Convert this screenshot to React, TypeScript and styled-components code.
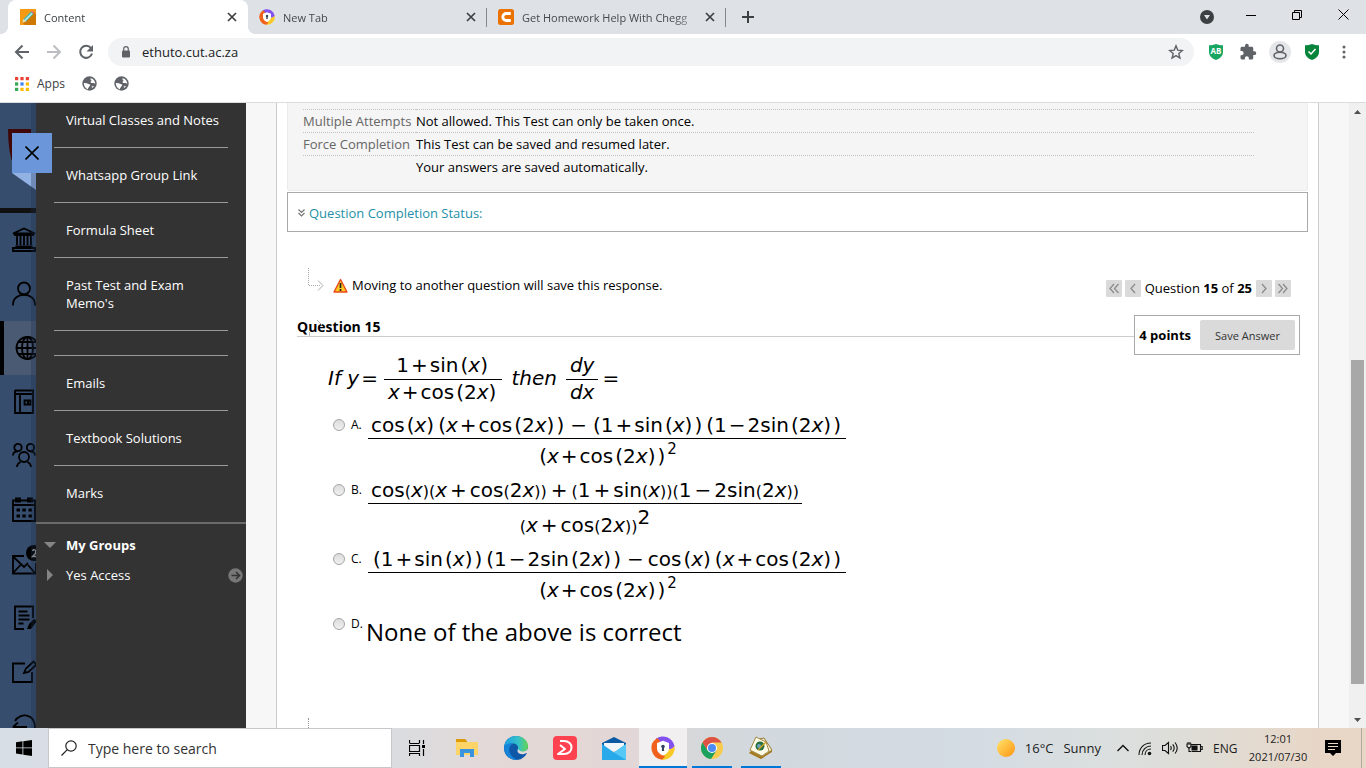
import React from 'react';
import styled, { createGlobalStyle, css } from 'styled-components';

const GlobalStyle = createGlobalStyle`
  * { box-sizing: border-box; }
  html, body { margin: 0; height: 100%; overflow: hidden; }
  body { font-family: "Open Sans", "Noto Sans", sans-serif; font-size: 13px; color: #000; }
  button { font: inherit; color: inherit; border: 0; padding: 0; background: none; cursor: pointer; }
  a { color: inherit; text-decoration: none; }
  svg { display: block; flex: none; }
`;

const Screen = styled.div`
  display: flex;
  flex-direction: column;
  height: 100vh;
  background: #fff;
`;

/* ---------- Browser chrome ---------- */

const TabStrip = styled.div`
  display: flex;
  height: 34px;
  padding-left: 8px;
  background: #dee1e6;
`;

const Tab = styled.div<{ $active?: boolean; $sep?: boolean }>`
  position: relative;
  display: flex;
  align-items: center;
  width: ${p => (p.$active ? 240 : 239)}px;
  padding: 0 8px 0 ${p => (p.$active ? 12 : 11)}px;
  gap: 8px;
  font-size: 11px;
  color: ${p => (p.$active ? '#3c4043' : '#45494d')};
  ${p => p.$active && css`
    background: #fff;
    border-radius: 8px 8px 0 0;
    &::before, &::after {
      content: '';
      position: absolute;
      bottom: 0;
      width: 8px;
      height: 8px;
    }
    &::before { left: -8px; background: radial-gradient(circle at 0 0, #dee1e6 8px, #fff 8px); }
    &::after { right: -8px; background: radial-gradient(circle at 100% 0, #dee1e6 8px, #fff 8px); }
  `}
  ${p => p.$sep && css`
    &::after {
      content: '';
      position: absolute;
      right: 0;
      top: 8px;
      width: 1px;
      height: 19px;
      background: #84888d;
    }
  `}
`;

const TabTitle = styled.span`
  flex: 1;
  min-width: 0;
  overflow: hidden;
  white-space: nowrap;
  mask-image: linear-gradient(to right, #000 calc(100% - 20px), rgba(0, 0, 0, 0.3));
`;

const IconButton = styled.button<{ $w: number; $h: number }>`
  display: flex;
  flex: none;
  align-items: center;
  justify-content: center;
  width: ${p => p.$w}px;
  height: ${p => p.$h}px;
`;

const Spacer = styled.div`flex: 1;`;

const NewTabButton = styled(IconButton)`margin-left: 7px;`;
const DropButton = styled(IconButton)`margin-right: 5px;`;

const Toolbar = styled.div`
  display: flex;
  align-items: center;
  height: 36px;
  padding: 0 6px;
`;

const AddressBar = styled.div`
  display: flex;
  flex: 1;
  align-items: center;
  height: 28px;
  margin: 0 6px;
  padding: 0 4px 0 12px;
  border-radius: 14px;
  background: #f1f3f4;
`;

const AddressInput = styled.input`
  flex: 1;
  min-width: 0;
  margin-left: 10px;
  padding: 0;
  border: 0;
  outline: 0;
  background: none;
  font: 13px "Open Sans", sans-serif;
  color: #202124;
`;

const Profile = styled.span`
  display: flex;
  align-items: center;
  justify-content: center;
  width: 22px;
  height: 22px;
  border-radius: 11px;
  background: #e4e6ea;
`;

const Bookmarks = styled.div`
  display: flex;
  align-items: center;
  height: 33px;
  padding: 0 15px 5px;
  border-bottom: 1px solid #dadce0;
  font-size: 12px;
  color: #3c4043;
`;

const Bookmark = styled.a`
  display: flex;
  align-items: center;
  gap: 8px;
  margin-right: 17px;
`;

/* ---------- Page shell ---------- */

const Page = styled.div`
  display: flex;
  flex: 1;
  min-height: 0;
  background: #f7f7f7;
`;

const Rail = styled.nav`
  position: relative;
  width: 36px;
  background: #374d6e;
  &::after {
    content: '';
    position: absolute;
    inset: 0 0 0 31px;
    background: rgba(30, 45, 75, 0.3);
    pointer-events: none;
  }
`;

const RailClip = styled.div`
  height: 100%;
  overflow: hidden;
`;

const RailLogo = styled.div`
  height: 110px;
  border-bottom: 5px solid #111;
`;

const RailLink = styled.a<{ $active?: boolean }>`
  display: flex;
  align-items: center;
  height: 54px;
  padding-left: ${p => (p.$active ? 11 : 12)}px;
  ${p => p.$active && css`
    border-left: 4px solid #000;
    background: #4a5a72;
  `}
`;

const CloseButton = styled.button`
  position: absolute;
  z-index: 2;
  left: 12px;
  top: 30px;
  display: flex;
  align-items: center;
  justify-content: center;
  width: 40px;
  height: 40px;
  background: #6b96d9;
`;

const Menu = styled.nav`
  width: 210px;
  overflow: hidden;
  background: #333;
  color: #fff;
  line-height: 18px;
`;

const MenuList = styled.div`
  padding: 0 18px;
  border-bottom: 2px solid #6a6a6a;
`;

const MenuItem = styled.a<{ $top?: number; $bottom?: number; $last?: boolean }>`
  display: block;
  padding: ${p => p.$top ?? 18}px 0 ${p => p.$bottom ?? 18}px 12px;
  border-bottom: ${p => (p.$last ? 0 : 1)}px solid #999;
`;

const Groups = styled.div`padding-top: 6px;`;

const GroupRow = styled.a<{ $bold?: boolean }>`
  display: flex;
  align-items: center;
  height: 30px;
  padding: 0 3px 0 8px;
  font-weight: ${p => (p.$bold ? 700 : 400)};
`;

const GroupName = styled.span`
  flex: 1;
  padding-left: 10px;
`;

const Sheet = styled.main`
  flex: 1;
  min-width: 0;
  margin: 0 30px;
  padding: 0 10px;
  overflow: hidden;
  border: solid #ccc;
  border-width: 0 1px;
  background: #fff;
`;

const ScrollTrack = styled.div`
  display: flex;
  flex-direction: column;
  align-items: center;
  justify-content: space-between;
  width: 17px;
  padding: 7px 0 6px;
  background: #f0f0f0;
`;

const ScrollThumb = styled.div`
  flex: none;
  width: 13px;
  height: 53%;
  margin-top: auto;
  margin-bottom: 34px;
  background: #a8a8a8;
`;

/* ---------- Test content ---------- */

const InfoPanel = styled.section`
  height: 88px;
  padding: 6px 53px 0 15px;
  border: solid #ebebeb;
  border-width: 0 1px 1px;
  border-radius: 0 0 3px 3px;
  background: #f5f5f5;
`;

const InfoTable = styled.table`
  width: 100%;
  border-collapse: separate;
  border-spacing: 0;
  text-align: left;
  line-height: 22px;
  th, td { height: 23px; padding: 0; border-top: 1px dotted #c2c2c2; }
  th { width: 113px; font-weight: 400; color: #666; white-space: nowrap; }
`;

const StatusBox = styled.section`
  display: flex;
  align-items: center;
  height: 40px;
  margin-top: 1px;
  padding: 2px 0 0 10px;
  border: 1px solid #a9a9a9;
`;

const StatusLink = styled.button`
  display: flex;
  align-items: center;
  gap: 4px;
  color: #248fa8;
`;

const MessageRow = styled.div`
  display: flex;
  align-items: flex-start;
  height: 47px;
  margin-top: 36px;
  padding: 0 17px 0 20px;
`;

const Warning = styled.p`
  display: flex;
  align-items: center;
  gap: 4px;
  margin: 7px 0 0 9px;
  line-height: 20px;
`;

const Pager = styled.div`
  display: flex;
  align-items: center;
  gap: 3px;
  margin: 11px 0 0 auto;
  line-height: 18px;
`;

const PagerText = styled.span`padding: 0 1px;`;

const PagerButton = styled.button`
  display: flex;
  align-items: center;
  justify-content: center;
  width: 16px;
  height: 17px;
  border-radius: 1px;
  background: #dadada;
`;

const QuestionHeader = styled.header`
  display: flex;
  align-items: flex-start;
  padding: 0 8px 0 10px;
`;

const QuestionTitle = styled.h3`
  position: relative;
  flex: 1;
  margin: 0;
  padding-top: 2px;
  border-bottom: 1px solid #ccc;
  font-size: 14px;
  line-height: 19px;
`;

const TitleArrow = styled.svg`
  position: absolute;
  left: 11px;
  top: 3px;
`;

const PointsBox = styled.div`
  display: flex;
  align-items: center;
  gap: 9px;
  height: 40px;
  padding: 0 4px;
  border: 1px solid #a9a9a9;
  font-weight: 700;
`;

const SaveButton = styled.button`
  width: 95px;
  height: 30px;
  border-radius: 2px;
  background: #dadada;
  color: #333;
  font-size: 11px;
  font-weight: 400;
`;

const Math = styled.div`
  display: flex;
  align-items: center;
  font-family: "DejaVu Sans", sans-serif;
  font-size: 20px;
  line-height: 24px;
  white-space: nowrap;
`;

const Prompt = styled(Math)`
  height: 52px;
  margin: -3px 0 9px 41px;
`;

const Variable = styled.i<{ $left?: number }>`
  margin-left: ${p => p.$left ?? 0}px;
`;

const Frac = styled.div<{ $left?: number }>`
  display: flex;
  flex-direction: column;
  align-items: center;
  margin-left: ${p => p.$left ?? 0}px;
`;

const Numerator = styled.div<{ $pad: number }>`
  align-self: stretch;
  padding: 0 3px ${p => p.$pad}px;
  border-bottom: 1px solid #000;
  text-align: center;
`;

const Denominator = styled.div<{ $top: number }>`
  padding: ${p => p.$top}px 4px 0;
`;

const Token = styled.span<{ $kind: string; $compact?: boolean }>`
  ${p => p.$kind === 'var' && css`font-style: italic;`}
  ${p => p.$kind === 'open' && css`margin-left: ${p.$compact ? 0 : 2}px;`}
  ${p => p.$kind === 'close' && css`margin-right: ${p.$compact ? 0 : 2}px;`}
  ${p => p.$compact && (p.$kind === 'open' || p.$kind === 'close') && css`
    font-size: 16px;
    line-height: 16px;
  `}
  ${p => p.$kind === 'op' && css`margin: 0 ${p.$compact ? 3 : 2}px;`}
  ${p => p.$kind === 'main' && css`margin: 0 4px;`}
`;

const Power = styled.sup<{ $big?: boolean }>`
  position: relative;
  top: ${p => (p.$big ? -8 : -9)}px;
  font-size: ${p => (p.$big ? 20 : 15)}px;
  line-height: 0;
  vertical-align: baseline;
`;

const Options = styled.div`
  display: flex;
  flex-direction: column;
  gap: 10px;
  padding-left: 46px;
`;

const Option = styled.label`
  display: flex;
  align-items: flex-start;
`;

const Radio = styled.input`
  appearance: none;
  width: 12px;
  height: 12px;
  margin: 6px 6px 0 0;
  border: 1px solid #a5a5a5;
  border-radius: 6px;
  background: linear-gradient(#dcdcdc, #f0f0f0);
`;

const Letter = styled.span`
  width: 17px;
  font-size: 12px;
  line-height: 24px;
`;

const PlainAnswer = styled.span`
  margin: 4px 0 0 -2px;
  font-size: 24px;
  line-height: 32px;
`;

const TailLine = styled.div`
  height: 30px;
  margin: 70px 0 0 21px;
  border-left: 1px dotted #999;
`;

/* ---------- Taskbar ---------- */

const Taskbar = styled.footer`
  display: flex;
  height: 40px;
  background: linear-gradient(to right, #d8dee5 0, #dadcdf 29%, #e4d8d6 37%, #e2d7d6 46%, #d2d8dc 53%, #d3dbe3 70%, #dbdfde 82%, #e0dcd4 89%, #e8d6c6 97%);
`;

const SearchBox = styled.label`
  display: flex;
  align-items: center;
  width: 344px;
  padding-left: 12px;
  gap: 11px;
  border: 1px solid #c5c7ca;
  background: #fff;
`;

const SearchInput = styled.input`
  flex: 1;
  min-width: 0;
  padding: 0;
  border: 0;
  outline: 0;
  font: 14px "Open Sans", sans-serif;
  &::placeholder { color: #333; opacity: 1; }
`;

const Apps = styled.div`
  display: flex;
  gap: 1px;
  padding-left: 2px;
`;

const AppButton = styled.button<{ $state?: 'active' | 'open' }>`
  position: relative;
  display: flex;
  align-items: center;
  justify-content: center;
  width: 48px;
  background: ${p => (p.$state === 'active' ? '#f1efef' : 'none')};
  ${p => p.$state && css`
    &::after {
      content: '';
      position: absolute;
      bottom: 0;
      left: ${p.$state === 'active' ? 0 : 4}px;
      right: ${p.$state === 'active' ? 0 : 4}px;
      height: 2px;
      background: #0078d7;
    }
  `}
`;

const Tray = styled.div`
  display: flex;
  align-items: center;
  margin-left: auto;
  color: #1c1c1c;
`;

const Weather = styled.button`
  display: flex;
  align-items: center;
  gap: 10px;
  margin-right: 15px;
`;

const TrayIcons = styled.div`
  display: flex;
  align-items: center;
  gap: 8px;
  margin-right: 10px;
`;

const Language = styled.button`
  width: 24px;
  font-size: 12px;
`;

const Clock = styled.button`
  width: 60px;
  margin: 0 16px 0 11px;
  font-size: 11px;
  line-height: 18px;
`;

const ShowDesktop = styled.div`
  align-self: stretch;
  width: 5px;
  margin-left: 19px;
  border-left: 1px solid #b5aaa2;
`;

/* ---------- Icons ---------- */

const CloseX = () => (
  <svg width="16" height="16" viewBox="0 0 16 16" stroke="#3c4043" strokeWidth="1.7"><path d="M4 4l8 8M12 4l-8 8" /></svg>
);

const PencilIcon = () => (
  <svg width="16" height="16" viewBox="0 0 16 16">
    <rect width="16" height="16" fill="#f59a12" /><path d="M3 14L14 3l2 2v11H5z" fill="#cf7905" />
    <path d="M2.5 13.5l1-3.500L11 2.500l2.500 2.500L6 12.500z" fill="#4cb9b4" /><path d="M5 11.500L12 4.300" stroke="#c5f3ef" strokeWidth="1.200" />
    <path d="M2.500 13.500l1-3.500L6 12.500z" fill="#f6dfb4" /><path d="M11 2.500l1-.9 2.400 2.500-.9.9z" fill="#e36b7e" />
  </svg>
);

const AvastIcon = ({ size }: { size: number }) => (
  <svg width={size} height={size} viewBox="0 0 24 24">
    <path d="M5 2.500A12 12 0 0 1 23.500 10Q21 15 16 12L8 6z" fill="#8352ee" />
    <path d="M23.500 10A11.700 11.700 0 0 1 11 23.700L7 17l9-4q5 1 7.500-3z" fill="#f9c928" />
    <path d="M11 23.700A11.700 11.700 0 0 1 5.500 2.500Q7 1.500 9 5L7 13q0 5 7 7-1 2-3 3.700z" fill="#f0611c" />
    <path d="M6 7l6-2.200L18 7v5.500c0 3.500-3 5.800-6 7-3-1.200-6-3.500-6-7z" fill="#fff" />
    <circle cx="12" cy="10.500" r="1.800" fill="#33415f" /><path d="M11.200 11h1.600l.4 4h-2.400z" fill="#33415f" />
  </svg>
);

const CheggIcon = () => (
  <svg width="16" height="16" viewBox="0 0 16 16">
    <rect width="16" height="16" rx="2.500" fill="#eb7100" />
    <path d="M12.800 4.500H8.300a3.500 3.500 0 0 0 0 7h4.500" fill="none" stroke="#fff" strokeWidth="2.800" />
  </svg>
);

const GlobeIcon = () => (
  <svg width="15" height="15" viewBox="0 0 15 15">
    <circle cx="7.500" cy="7.500" r="7.200" fill="#5f6368" />
    <path d="M1.800 7c1.500-.3 2.700.4 3.700.4.900 0 1 .8 2 .8.900 0 1 1 .3 1.600-.9.700-.3 1.500-1.200 1.700-.6.200-.5 1.400-.7 1.900C3.600 12.700 1.800 10 1.800 7z" fill="#fff" />
    <path d="M8.500 2.200c2.600.4 4.700 2.600 4.800 5.300-.8.300-1.300-.6-2.300-.5-1.300.2-2.600-.3-2.500-1.200.1-.7 1.100-.7.900-1.400-.2-.8-1.500-.7-.9-2.200z" fill="#fff" />
    <path d="M9.500 10.500l2.700-.8-1.700 2.300z" fill="#fff" />
  </svg>
);

const Rail24 = ({ children }: { children: React.ReactNode }) => (
  <svg width="24" height="26" viewBox="0 0 24 26" fill="none" stroke="#000" strokeWidth="1.800" overflow="visible">{children}</svg>
);

const railIcons: React.ReactNode[] = [
  <Rail24><path d="M1 6.500L12 1.500l11 5zM2 8h20M3.500 19.500h17M1 24v-3h22v3zM5 9v9M8.500 9v9M12 9v9M15.500 9v9M19 9v9" /></Rail24>,
  <Rail24><circle cx="12" cy="7.500" r="6" /><path d="M1 24.500v-1C1 10.500 23 10.500 23 23.500v1" /></Rail24>,
  <Rail24><circle cx="12.500" cy="13" r="11" /><ellipse cx="12.500" cy="13" rx="5.500" ry="11" /><path d="M12.500 2v22M1.500 13h22M3.500 7h18M3.500 19h18" /></Rail24>,
  <Rail24><path d="M3 1.500h19M3 1v23h18V5H3M8 5v19M12.500 11.500h6v4h-6zM15 13.500h2M21 1v4" /></Rail24>,
  <Rail24><circle cx="6" cy="4.500" r="3.700" /><circle cx="18.500" cy="4.500" r="3.700" /><circle cx="12" cy="14" r="5" /><path d="M1 12.500c0-3 2-4.500 5-3.800M23 12.500c0-3-2-4.500-5-3.800M5 24c0-2.500 1.500-4 3.500-5M19 24c0-2.500-1.500-4-3.500-5" /></Rail24>,
  <Rail24><path d="M1 3.500h22V24H1zM1 8h22" /><path d="M4 1.500h4v3H4zM16 1.500h4v3h-4z" /><path d="M4.500 13h3.500M10.300 13h3.500M16.500 13H20M4.500 19h3.500M10.300 19h3.500M16.500 19H20" strokeWidth="3" /></Rail24>,
  <Rail24><path d="M12 5H1v17.500h23V12M1 5.500l11 10.500 4-4M1 22l7.500-8M23 22l-7-8" /><circle cx="22" cy="2" r="8" fill="#000" stroke="none" /><path d="M20.500 0q1-2 2.500-1t0 4l-2.500 2.500H25" stroke="#aaa" strokeWidth="1.400" /></Rail24>,
  <Rail24><path d="M12 24H3V1.500h18V13M6.500 6.500h9M6.500 10.500h11M6.500 14.500h11M6.500 18.500h5" /><path d="M15 24l2-5 5-5 3 2-6 8z" fill="#000" stroke="none" /></Rail24>,
  <Rail24><path d="M13 4.500H1v18.500h19V13M12 14l2-4.500 7.500-7 3 3-8 7.500z" /></Rail24>,
  <Rail24><path d="M3 8c5-8.500 20-8 20 7M1 14l5-4.500M1 14l5 4M1 14h14" /></Rail24>,
];

const Chevron = ({ d }: { d: string }) => (
  <svg width="12" height="11" viewBox="0 0 12 11" fill="none" stroke="#8b8b8b" strokeWidth="1.300"><path d={d} /></svg>
);

/* ---------- Math ---------- */

type Part = { text: string; kind: string };

/** Splits an expression into tokens; "~" marks the sum or difference between the two outer terms. */
const parse = (source: string): Part[] =>
  (source.match(/cos|sin|~?[+−]|[()]|\d|[a-z]/g) ?? []).map(raw => {
    const text = raw.replace('~', '');
    if (text === '(') return { text, kind: 'open' };
    if (text === ')') return { text, kind: 'close' };
    if (text === '+' || text === '−') return { text, kind: raw.length > 1 ? 'main' : 'op' };
    return { text, kind: text.length === 1 && /[a-z]/.test(text) ? 'var' : 'plain' };
  });

const Expr = ({ of, compact }: { of: string; compact?: boolean }) => (
  <>{parse(of).map((t, i) => <Token key={i} $kind={t.kind} $compact={compact}>{t.text}</Token>)}</>
);

const options = [
  { letter: 'A.', top: 'cos(x)(x+cos(2x))~−(1+sin(x))(1−2sin(2x))' },
  { letter: 'B.', top: 'cos(x)(x+cos(2x))~+(1+sin(x))(1−2sin(2x))', compact: true },
  { letter: 'C.', top: '(1+sin(x))(1−2sin(2x))~−cos(x)(x+cos(2x))' },
];

const App = () => (
  <Screen>
    <GlobalStyle />
    <header>
      <TabStrip>
        <Tab $active><PencilIcon /><TabTitle>Content</TabTitle><IconButton aria-label="Close tab" $w={16} $h={16}><CloseX /></IconButton></Tab>
        <Tab $sep><AvastIcon size={16} /><TabTitle>New Tab</TabTitle><IconButton aria-label="Close tab" $w={16} $h={16}><CloseX /></IconButton></Tab>
        <Tab $sep><CheggIcon /><TabTitle>Get Homework Help With Chegg</TabTitle><IconButton aria-label="Close tab" $w={16} $h={16}><CloseX /></IconButton></Tab>
        <NewTabButton aria-label="New tab" $w={30} $h={34}>
          <svg width="12" height="12" viewBox="0 0 12 12" stroke="#3c4043" strokeWidth="2"><path d="M6 0v12M0 6h12" /></svg>
        </NewTabButton>
        <Spacer />
        <DropButton aria-label="Search tabs" $w={32} $h={34}>
          <svg width="14" height="14" viewBox="0 0 14 14"><circle cx="7" cy="7" r="7" fill="#3c4043" /><path d="M4 5h6l-3 4.500z" fill="#dee1e6" /></svg>
        </DropButton>
        <IconButton aria-label="Minimize" $w={46} $h={29}><svg width="10" height="10" viewBox="0 0 10 10"><path d="M0 5.500h10" stroke="#000" /></svg></IconButton>
        <IconButton aria-label="Restore" $w={46} $h={29}><svg width="10" height="10" viewBox="0 0 10 10" fill="none" stroke="#000"><path d="M.5 2.500h7v7h-7zM2.500 2.500v-2h7v7h-2" /></svg></IconButton>
        <IconButton aria-label="Close" $w={46} $h={29}><svg width="11" height="11" viewBox="0 0 11 11" stroke="#000"><path d="M.5.500l10 10M10.500.500l-10 10" /></svg></IconButton>
      </TabStrip>

      <Toolbar>
        <IconButton aria-label="Back" $w={32} $h={32}><svg width="16" height="16" viewBox="0 0 16 16" fill="none" stroke="#5f6368" strokeWidth="2"><path d="M15 8H2M8.500 1.500L2 8l6.500 6.500" /></svg></IconButton>
        <IconButton aria-label="Forward" $w={32} $h={32}><svg width="16" height="16" viewBox="0 0 16 16" fill="none" stroke="#bcbec1" strokeWidth="2"><path d="M1 8h13M7.500 1.500L14 8l-6.500 6.500" /></svg></IconButton>
        <IconButton aria-label="Reload" $w={32} $h={32}><svg width="16" height="16" viewBox="0 0 16 16"><path d="M13 4.200A6 6 0 1 0 14 9.500" fill="none" stroke="#5f6368" strokeWidth="2" /><path d="M15 1v6.500H8.500z" fill="#5f6368" /></svg></IconButton>
        <AddressBar>
          <svg width="12" height="12" viewBox="0 0 12 12"><rect x="2" y="4.500" width="8" height="7" rx="1" fill="#5f6368" /><path d="M3.700 5V3a2.300 2.300 0 0 1 4.600 0v2" fill="none" stroke="#5f6368" strokeWidth="1.200" /></svg>
          <AddressInput aria-label="Address" defaultValue="ethuto.cut.ac.za" />
          <IconButton aria-label="Bookmark this page" $w={28} $h={28}>
            <svg width="16" height="16" viewBox="0 0 16 16" fill="none" stroke="#5f6368" strokeWidth="1.400"><path d="M8 1.800l1.700 4.300 4.600.4-3.500 3 1.100 4.500L8 11.600 4.100 14l1.100-4.500-3.500-3 4.600-.4z" /></svg>
          </IconButton>
        </AddressBar>
        <IconButton aria-label="AB extension" $w={32} $h={32}>
          <svg width="14" height="16" viewBox="0 0 14 16"><path d="M7 0c2 1 4.500 1.300 7 1.300V8c0 4.500-4 7-7 8-3-1-7-3.500-7-8V1.300C2.500 1.300 5 1 7 0z" fill="#18a561" /><text x="7" y="10" textAnchor="middle" fill="#fff" fontSize="8" fontWeight="700" fontFamily="Open Sans">AB</text></svg>
        </IconButton>
        <IconButton aria-label="Extensions" $w={32} $h={32}>
          <svg width="18" height="18" viewBox="0 0 24 24" fill="#5f6368"><path d="M20.500 11H19V7c0-1.100-.9-2-2-2h-4V3.500a2.500 2.500 0 0 0-5 0V5H4c-1.100 0-2 .9-2 2v3.800h1.500a2.700 2.700 0 0 1 0 5.400H2V20c0 1.100.9 2 2 2h3.800v-1.500a2.700 2.700 0 0 1 5.400 0V22H17c1.100 0 2-.9 2-2v-4h1.500a2.500 2.500 0 0 0 0-5z" /></svg>
        </IconButton>
        <IconButton aria-label="Profile" $w={32} $h={32}>
          <Profile><svg width="16" height="16" viewBox="0 0 16 16" fill="none" stroke="#5f6368" strokeWidth="1.600"><circle cx="8" cy="4.500" r="3.500" /><ellipse cx="8" cy="11.500" rx="6" ry="3.300" /></svg></Profile>
        </IconButton>
        <IconButton aria-label="Security" $w={32} $h={32}>
          <svg width="14" height="16" viewBox="0 0 14 16"><path d="M7 0c2 1 4.500 1.300 7 1.300V8c0 4.500-4 7-7 8-3-1-7-3.500-7-8V1.300C2.500 1.300 5 1 7 0z" fill="#07843c" /><path d="M3.500 7.500L6 10l4.500-5" fill="none" stroke="#fff" strokeWidth="1.500" /></svg>
        </IconButton>
        <IconButton aria-label="Menu" $w={32} $h={32}>
          <svg width="4" height="14" viewBox="0 0 4 14" fill="#5f6368"><circle cx="2" cy="2" r="1.500" /><circle cx="2" cy="7" r="1.500" /><circle cx="2" cy="12" r="1.500" /></svg>
        </IconButton>
      </Toolbar>

      <Bookmarks>
        <Bookmark href="#apps">
          <svg width="14" height="14" viewBox="0 0 13 13">
            {['#ea4335', '#ea4335', '#ea4335', '#34a853', '#4285f4', '#fbbc04', '#34a853', '#fbbc04', '#fbbc04'].map((c, i) => (
              <rect key={i} x={(i % 3) * 5} y={(i - (i % 3)) / 3 * 5} width="3" height="3" fill={c} />
            ))}
          </svg>
          Apps
        </Bookmark>
        <Bookmark href="#one" aria-label="Bookmark 1"><GlobeIcon /></Bookmark>
        <Bookmark href="#two" aria-label="Bookmark 2"><GlobeIcon /></Bookmark>
      </Bookmarks>
    </header>

    <Page>
      <Rail>
        <RailClip>
          <RailLogo>
            <svg width="36" height="104" viewBox="0 0 36 104">
              <path d="M8 26h23v38H14Q8 50 8 26z" fill="#3f0707" /><path d="M12 70h24v17z" fill="#93b2e4" />
            </svg>
          </RailLogo>
          {railIcons.map((icon, i) => <RailLink key={i} href={`#nav-${i}`} $active={i === 2} aria-label={`Navigation ${i + 1}`}>{icon}</RailLink>)}
        </RailClip>
        <CloseButton aria-label="Close">
          <svg width="14" height="14" viewBox="0 0 14 14" stroke="#000" strokeWidth="1.600"><path d="M.5.500l13 13M13.500.500l-13 13" /></svg>
        </CloseButton>
      </Rail>

      <Menu>
        <MenuList>
          <MenuItem href="#virtual" $top={8}>Virtual Classes and Notes</MenuItem>
          <MenuItem href="#whatsapp">Whatsapp Group Link</MenuItem>
          <MenuItem href="#formula">Formula Sheet</MenuItem>
          <MenuItem href="#past">Past Test and Exam Memo's</MenuItem>
          <MenuItem as="div" $top={12} $bottom={12} />
          <MenuItem href="#emails">Emails</MenuItem>
          <MenuItem href="#textbook">Textbook Solutions</MenuItem>
          <MenuItem href="#marks" $bottom={20} $last>Marks</MenuItem>
        </MenuList>
        <Groups>
          <GroupRow href="#groups" $bold>
            <svg width="12" height="12" viewBox="0 0 12 12"><path d="M0 3h12L6 9z" fill="#858585" /></svg>
            <GroupName>My Groups</GroupName>
          </GroupRow>
          <GroupRow href="#yes">
            <svg width="12" height="12" viewBox="0 0 12 12"><path d="M3 0l6 6-6 6z" fill="#858585" /></svg>
            <GroupName>Yes Access</GroupName>
            <svg width="15" height="15" viewBox="0 0 15 15"><circle cx="7.500" cy="7.500" r="7.200" fill="#777" /><path d="M3.500 7.500h8M8 4l3.500 3.500L8 11" fill="none" stroke="#333" strokeWidth="1.600" /></svg>
          </GroupRow>
        </Groups>
      </Menu>

      <Sheet>
        <InfoPanel>
          <InfoTable>
            <tbody>
              <tr><th scope="row">Multiple Attempts</th><td>Not allowed. This Test can only be taken once.</td></tr>
              <tr><th scope="row">Force Completion</th><td>This Test can be saved and resumed later.</td></tr>
              <tr><th /><td>Your answers are saved automatically.</td></tr>
            </tbody>
          </InfoTable>
        </InfoPanel>

        <StatusBox>
          <StatusLink>
            <svg width="7" height="8" viewBox="0 0 7 8" fill="none" stroke="#777" strokeWidth="1.200"><path d="M.5.500l3 3 3-3M.5 4l3 3 3-3" /></svg>
            Question Completion Status:
          </StatusLink>
        </StatusBox>

        <MessageRow>
          <svg width="17" height="24" viewBox="0 0 17 24" fill="none" stroke="#aaa"><path d="M1.500 0v18M2 17.500h12" strokeDasharray="1 1" /><path d="M11 12.500l5 5-5 5" stroke="#aaa" /></svg>
          <Warning>
            <svg width="15" height="15" viewBox="0 0 15 15">
              <path d="M7.500 1.500L14 14H1z" fill="#ffc91f" stroke="#e8481a" strokeWidth="1.400" strokeLinejoin="round" />
              <path d="M7.500 5v5M7.500 11v2" stroke="#222" strokeWidth="1.700" />
            </svg>
            Moving to another question will save this response.
          </Warning>
          <Pager>
            <PagerButton aria-label="First question"><Chevron d="M6 1L2 5.500 6 10M10.500 1l-4 4.500 4 4.500" /></PagerButton>
            <PagerButton aria-label="Previous question"><Chevron d="M8 1L4 5.500 8 10" /></PagerButton>
            <PagerText>Question <b>15</b> of <b>25</b></PagerText>
            <PagerButton aria-label="Next question"><Chevron d="M4 1l4 4.500L4 10" /></PagerButton>
            <PagerButton aria-label="Last question"><Chevron d="M1.500 1l4 4.500-4 4.500M6 1l4 4.500L6 10" /></PagerButton>
          </Pager>
        </MessageRow>

        <QuestionHeader>
          <QuestionTitle>
            <TitleArrow width="16" height="18" viewBox="0 0 16 18" fill="none" stroke="#bbb"><path d="M9 2l5 5M1.500 14v4" /></TitleArrow>
            Question 15
          </QuestionTitle>
          <PointsBox>4 points<SaveButton>Save Answer</SaveButton></PointsBox>
        </QuestionHeader>

        <Prompt>
          <i>If y</i><Variable as="span" $left={2}>=</Variable>
          <Frac $left={6}>
            <Numerator $pad={2}><Expr of="1+sin(x)" /></Numerator>
            <Denominator $top={0}><Expr of="x+cos(2x)" /></Denominator>
          </Frac>
          <Variable $left={9}>then</Variable>
          <Frac $left={9}>
            <Numerator $pad={2}><i>dy</i></Numerator>
            <Denominator $top={0}><i>dx</i></Denominator>
          </Frac>
          <Variable as="span" $left={4}>=</Variable>
        </Prompt>

        <Options>
          {options.map(o => (
            <Option key={o.letter}>
              <Radio type="radio" name="answer" />
              <Letter>{o.letter}</Letter>
              <Math>
                <Frac>
                  <Numerator $pad={1}><Expr of={o.top} compact={o.compact} /></Numerator>
                  <Denominator $top={o.compact ? 9 : 5}><Expr of="(x+cos(2x))" compact={o.compact} /><Power $big={o.compact}>2</Power></Denominator>
                </Frac>
              </Math>
            </Option>
          ))}
          <Option>
            <Radio type="radio" name="answer" />
            <Letter>D.</Letter>
            <PlainAnswer>None of the above is correct</PlainAnswer>
          </Option>
        </Options>
        <TailLine />
      </Sheet>

      <ScrollTrack>
        <svg width="7" height="4" viewBox="0 0 7 4"><path d="M0 4l3.500-4L7 4z" fill="#505050" /></svg>
        <ScrollThumb />
        <svg width="7" height="4" viewBox="0 0 7 4"><path d="M0 0l3.500 4L7 0z" fill="#505050" /></svg>
      </ScrollTrack>
    </Page>

    <Taskbar>
      <IconButton aria-label="Start" $w={48} $h={40}>
        <svg width="16" height="16" viewBox="0 0 16 16"><path d="M0 2.200l6.500-.9v6.200H0zM7.300 1.200L16 0v7.500H7.300zM0 8.300h6.500v6.200L0 13.600zM7.300 8.300H16V16l-8.700-1.300z" /></svg>
      </IconButton>
      <SearchBox>
        <svg width="16" height="16" viewBox="0 0 16 16" fill="none" stroke="#222" strokeWidth="1.200"><circle cx="10" cy="6" r="5.200" /><path d="M6.300 9.700L.5 15.500" /></svg>
        <SearchInput placeholder="Type here to search" aria-label="Search" />
      </SearchBox>
      <Apps>
        <AppButton aria-label="Task view">
          <svg width="18" height="16" viewBox="0 0 18 16" fill="none" stroke="#000"><path d="M.5 0v3M10.500 0v3M.5 3.500h10M.5 5.500h10v6H.5zM.5 13.500h10M.5 13v3M10.500 13v3M14.500 0v4M14.500 9v7" strokeWidth="1.200" /><path d="M13 5h3v3h-3z" fill="#000" stroke="none" /></svg>
        </AppButton>
        <AppButton aria-label="File Explorer">
          <svg width="22" height="20" viewBox="0 0 22 20"><path d="M0 1h9l2 2v4H0z" fill="#dd9b08" /><path d="M0 4h22v13H0z" fill="#fdd467" /><path d="M4 19v-8h14v8h-4v-4H8v4z" fill="#3a93dd" /></svg>
        </AppButton>
        <AppButton aria-label="Edge">
          <svg width="24" height="24" viewBox="0 0 24 24">
            <defs><linearGradient id="edge" x1="0" x2="1"><stop offset="0" stopColor="#1b9de2" /><stop offset=".6" stopColor="#35c1c9" /><stop offset="1" stopColor="#66d64f" /></linearGradient></defs>
            <circle cx="12" cy="12" r="12" fill="#0f58a8" />
            <path d="M0 11C1 4 6 0 12 0c7 0 12 5 12 10 0 4-3 6-6 6-3 0-5-1-4-3 .8-3-1.500-5.500-5-5.500C4 7.500 1 9 0 11z" fill="url(#edge)" />
            <path d="M0 11c2-3.500 6-4 9-3.500C5 9 4 15 7 19c2 3 4.500 4.300 7 4.800C6 25 0 19 0 11z" fill="#1684d9" />
            <path d="M14 13c-2 4 3 7 8.500 4l1.500 1v-6c-1 4-7 5-10 1z" fill="#e2dad9" />
          </svg>
        </AppButton>
        <AppButton aria-label="Docs app">
          <svg width="24" height="24" viewBox="0 0 24 24"><rect width="24" height="24" rx="4" fill="#ff4250" /><path d="M7 5h4c10 0 10 13 0 13H5l7-5-5-4" fill="none" stroke="#fff" strokeWidth="2" strokeLinejoin="round" /></svg>
        </AppButton>
        <AppButton aria-label="Mail">
          <svg width="24" height="23" viewBox="0 0 24 23"><path d="M0 6l12-6 12 6v7H0z" fill="#0c59a4" /><path d="M2 6h20v8H2z" fill="#f3f6f9" /><path d="M0 7l12 8.500L24 7v16H0z" fill="#27a9ea" /><path d="M12 15.500L24 7v16z" fill="#55c8f5" /></svg>
        </AppButton>
        <AppButton aria-label="Secure Browser" $state="active"><AvastIcon size={24} /></AppButton>
        <AppButton aria-label="Chrome" $state="open">
          <svg width="22" height="22" viewBox="0 0 22 22"><circle cx="11" cy="11" r="11" fill="#f7cb4d" /><path d="M1.500 5.500A11 11 0 0 1 20.500 5.500H11L6 13z" fill="#de5246" /><path d="M1.500 5.500A11 11 0 0 0 10 22l5.500-8.500H6.500z" fill="#1aa15f" /><circle cx="11" cy="11" r="5" fill="#fff" /><circle cx="11" cy="11" r="4" fill="#4c8bf5" /></svg>
        </AppButton>
        <AppButton aria-label="Notes" $state="open">
          <svg width="24" height="24" viewBox="0 0 24 24"><path d="M0 17L13 8l10 6-11 9z" fill="#d9b85c" /><path d="M10 3l5-1 8 12-10 8z" fill="#f6edcf" stroke="#967b39" /><path d="M7 1l10 5 3 9-7 5L1 14z" fill="#fffbe9" stroke="#a28845" /><circle cx="11" cy="10" r="4.500" fill="#246d3c" /><circle cx="10" cy="10" r="2" fill="#70a3bd" /><path d="M9 14l8-8" stroke="#d0a224" strokeWidth="1.500" /><path d="M0 17l12 6v-3L2 15zM12 23l11-7v-2l-11 7z" fill="#a37b24" /></svg>
        </AppButton>
      </Apps>
      <Tray>
        <Weather>
          <svg width="18" height="18" viewBox="0 0 18 18"><defs><linearGradient id="sun" x1="0" y1="0" x2="1" y2="1"><stop stopColor="#ffe46a" /><stop offset="1" stopColor="#ff9412" /></linearGradient></defs><circle cx="9" cy="9" r="9" fill="url(#sun)" /></svg>
          <span>16°C</span>
          <span>Sunny</span>
        </Weather>
        <TrayIcons>
          <svg width="14" height="14" viewBox="0 0 14 14" fill="none" stroke="#111" strokeWidth="1.400"><path d="M1.500 10L7 4.500l5.500 5.500" /></svg>
          <svg width="16" height="16" viewBox="0 0 16 16" fill="none" stroke="#111" strokeWidth="1.100"><path d="M1 15C1 8 6 3 13 3M4 15c0-5 4-9 9-9M7 15c0-3.500 2.500-6 6-6" /><circle cx="11.500" cy="13.500" r="1.800" fill="#111" stroke="none" /></svg>
          <svg width="16" height="14" viewBox="0 0 16 14" fill="none" stroke="#111" strokeWidth="1.100"><path d="M.5 4.500H3l3.500-3v11L3 9.500H.5zM8.500 5q1.500 2 0 4M10.700 3.300q3 3.700 0 7.400M13 1.500q4.500 5.500 0 11" /></svg>
          <svg width="17" height="14" viewBox="0 0 17 14" fill="none" stroke="#111" strokeWidth="1.100"><path d="M5.500 3.500h9v7h-9M14.500 5.500h1.700v3h-1.700M1 3h4v2.500L3 7.500 1 5.500zM2 3V1M4 3V1M3 7v3.500h2" /><path d="M6 5h5v4H6z" fill="#111" /></svg>
        </TrayIcons>
        <Language>ENG</Language>
        <Clock>12:01<br />2021/07/30</Clock>
        <IconButton aria-label="Notifications" $w={18} $h={40}>
          <svg width="16" height="16" viewBox="0 0 16 16"><path d="M0 0h16v13h-5l-3 3-3-3H0z" fill="#000" /><path d="M3 3.500h10M3 6.500h10M3 9.500h7" stroke="#e8d9cb" /></svg>
        </IconButton>
        <ShowDesktop />
      </Tray>
    </Taskbar>
  </Screen>
);

export default App;
